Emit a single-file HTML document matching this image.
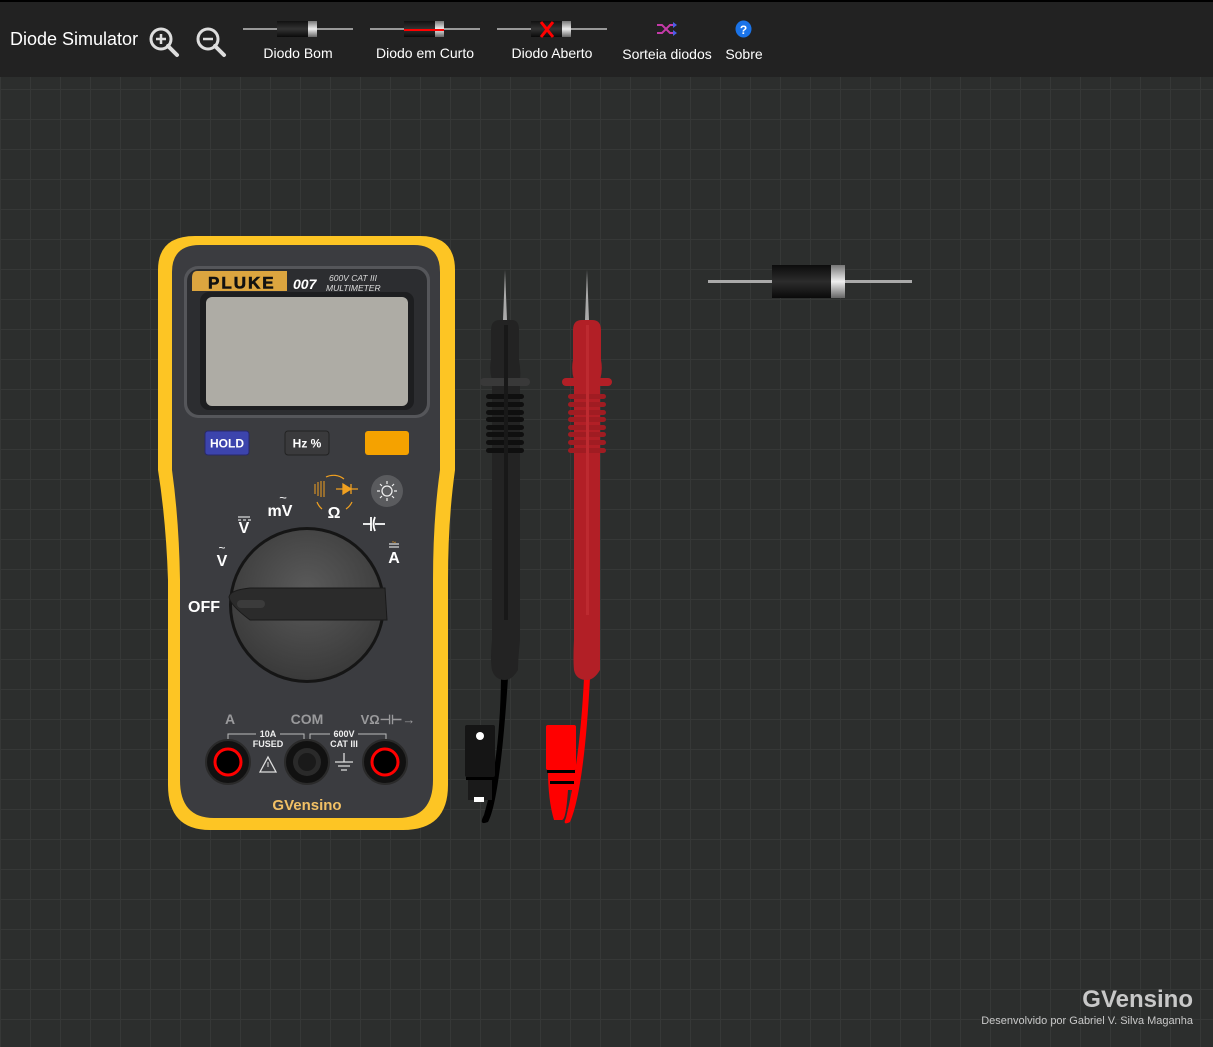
<!DOCTYPE html>
<html><head><meta charset="utf-8"><style>
*{margin:0;padding:0;box-sizing:border-box}
body{width:1213px;height:1047px;overflow:hidden;background:#2c2e2d;font-family:"Liberation Sans",Arial,sans-serif;position:relative}
.grid{position:absolute;left:0;top:77px;width:1213px;height:970px;
background-image:linear-gradient(#363837 1px,transparent 1px),linear-gradient(90deg,#363837 1px,transparent 1px);
background-size:30px 30px;background-position:0 12px,0 0}
.bar{position:absolute;left:0;top:0;width:1213px;height:77px;background:#222;border-top:2px solid #000}
.t{position:absolute;color:#fff;font-size:14px;text-align:center}
</style></head><body>
<div class="grid"></div>
<div class="bar">
<div class="t" style="left:10px;top:27px;font-size:18px;text-align:left">Diode Simulator</div>
<svg style="position:absolute;left:148px;top:24px" width="32" height="32" viewBox="0 0 32 32"><circle cx="13" cy="13" r="10" fill="none" stroke="#ddd" stroke-width="3"/><line x1="20" y1="20" x2="29" y2="29" stroke="#ddd" stroke-width="4" stroke-linecap="round"/><path d="M8 13h10M13 8v10" stroke="#ddd" stroke-width="2.5"/></svg>
<svg style="position:absolute;left:195px;top:24px" width="32" height="32" viewBox="0 0 32 32"><circle cx="13" cy="13" r="10" fill="none" stroke="#ddd" stroke-width="3"/><line x1="20" y1="20" x2="29" y2="29" stroke="#ddd" stroke-width="4" stroke-linecap="round"/><path d="M8 13h10" stroke="#ddd" stroke-width="2.5"/></svg>
<svg style="position:absolute;left:240px;top:15px" width="380" height="24">
<defs><linearGradient id="bd" x1="0" y1="0" x2="0" y2="1"><stop offset="0" stop-color="#111"/><stop offset=".5" stop-color="#333"/><stop offset="1" stop-color="#0a0a0a"/></linearGradient>
<linearGradient id="bs" x1="0" y1="0" x2="0" y2="1"><stop offset="0" stop-color="#777"/><stop offset=".5" stop-color="#eee"/><stop offset="1" stop-color="#666"/></linearGradient></defs>
<g><line x1="3" y1="12" x2="113" y2="12" stroke="#999" stroke-width="2"/><rect x="37" y="4" width="40" height="16" fill="url(#bd)"/><rect x="68" y="4" width="9" height="16" fill="url(#bs)"/></g>
<g transform="translate(127,0)"><line x1="3" y1="12" x2="113" y2="12" stroke="#999" stroke-width="2"/><rect x="37" y="4" width="40" height="16" fill="url(#bd)"/><rect x="68" y="4" width="9" height="16" fill="url(#bs)"/><line x1="37" y1="13" x2="77" y2="13" stroke="#f00" stroke-width="2"/></g>
<g transform="translate(254,0)"><line x1="3" y1="12" x2="113" y2="12" stroke="#999" stroke-width="2"/><rect x="37" y="4" width="40" height="16" fill="url(#bd)"/><rect x="68" y="4" width="9" height="16" fill="url(#bs)"/><path d="M47 5l12 15M59 5l-12 15" stroke="#f00" stroke-width="3"/></g>
</svg>
<div class="t" style="left:243px;top:43px;width:110px">Diodo Bom</div>
<div class="t" style="left:370px;top:43px;width:110px">Diodo em Curto</div>
<div class="t" style="left:497px;top:43px;width:110px">Diodo Aberto</div>
<svg style="position:absolute;left:656px;top:19px" width="22" height="16" viewBox="0 0 22 16"><path d="M1 4h5l8 8h5M1 12h5l8-8h5" fill="none" stroke="#c43aa8" stroke-width="2"/><path d="M17 1l4 3-4 3zM17 9l4 3-4 3z" fill="#4b5ee8"/></svg>
<div class="t" style="left:620px;top:44px;width:94px">Sorteia diodos</div>
<svg style="position:absolute;left:735px;top:18px" width="17" height="18"><ellipse cx="8.5" cy="9" rx="8" ry="8.5" fill="#1a73e8"/><text x="8.5" y="14" font-size="12" font-weight="bold" fill="#fff" text-anchor="middle" font-family="Liberation Sans">?</text></svg>
<div class="t" style="left:722px;top:44px;width:44px">Sobre</div>
</div>

<svg style="position:absolute;left:0;top:0" width="1213" height="1047">
<defs>
<radialGradient id="knob" cx=".5" cy=".4" r=".6"><stop offset="0" stop-color="#5a5a5a"/><stop offset="1" stop-color="#3a3a3a"/></radialGradient>
<linearGradient id="bd2" x1="0" y1="0" x2="0" y2="1"><stop offset="0" stop-color="#0c0c0c"/><stop offset=".5" stop-color="#2c2c2c"/><stop offset="1" stop-color="#0a0a0a"/></linearGradient>
<linearGradient id="bs2" x1="0" y1="0" x2="0" y2="1"><stop offset="0" stop-color="#777"/><stop offset=".5" stop-color="#f0f0f0"/><stop offset="1" stop-color="#666"/></linearGradient>
</defs>
<path d="M195 236 H420 Q455 236 455 270 V470 Q448 520 448 580 V785 Q448 830 403 830 H210 Q168 830 168 785 V580 Q166 520 158 470 V270 Q158 236 195 236Z" fill="#fdc524"/>
<path d="M200 245 H414 Q440 245 440 272 V470 Q433 520 433 580 V780 Q433 818 398 818 H214 Q180 818 180 780 V580 Q179 520 172 470 V272 Q172 245 200 245Z" fill="#3b3c40"/>
<rect x="184" y="266" width="246" height="152" rx="14" fill="#55565a"/>
<rect x="187" y="269" width="240" height="146" rx="12" fill="#2c2d30"/>
<path d="M197 271 H287 V291 H192 V278 Q192 271 197 271Z" fill="#dca53f"/>
<text x="208" y="288.5" font-size="17" font-weight="bold" fill="#111" letter-spacing="2" stroke="#111" stroke-width=".6">PLUKE</text>
<text x="293" y="289" font-size="14" font-weight="bold" font-style="italic" fill="#fff">007</text>
<text x="329" y="281" font-size="8.5" font-style="italic" fill="#ddd">600V CAT III</text>
<text x="326" y="291" font-size="8.5" font-style="italic" fill="#ddd">MULTIMETER</text>
<rect x="200" y="292" width="214" height="118" rx="9" fill="#1d1e20"/>
<rect x="206" y="297" width="202" height="109" rx="6" fill="#aeaca5"/>
<rect x="205" y="431" width="44" height="24" rx="3" fill="#3c44ad" stroke="#28296a"/>
<text x="227" y="447.5" font-size="12" font-weight="bold" fill="#fff" text-anchor="middle">HOLD</text>
<rect x="285" y="431" width="44" height="24" rx="3" fill="#3a3a3c" stroke="#222"/>
<text x="307" y="447.5" font-size="12" font-weight="bold" fill="#fff" text-anchor="middle">Hz %</text>
<rect x="365" y="431" width="44" height="24" rx="3" fill="#f5a200"/>
<text x="222" y="566" font-size="16" font-weight="bold" fill="#fff" text-anchor="middle">V</text><text x="222" y="552" font-size="12" fill="#fff" text-anchor="middle">~</text>
<text x="244" y="533" font-size="16" font-weight="bold" fill="#fff" text-anchor="middle">V</text><path d="M238 517h12M238 520h3M243 520h3M248 520h3" stroke="#fff" stroke-width="1"/>
<text x="280" y="516" font-size="16" font-weight="bold" fill="#fff" text-anchor="middle">mV</text><text x="283" y="502" font-size="13" fill="#fff" text-anchor="middle">~</text>
<text x="334" y="518" font-size="16" font-weight="bold" fill="#fff" text-anchor="middle">Ω</text>
<path d="M326 477a17 17 0 0 1 18 2M322 509a17 17 0 0 1 -5 -7M352 502a17 17 0 0 1 -6 7" fill="none" stroke="#f0a020" stroke-width="1.2"/>
<path d="M315 484v10M318 482v14M321 481v16M324 481v16" stroke="#f0a020" stroke-width="1"/>
<path d="M336 489h22M343 484l8 5-8 5zM351 484v10" fill="#f0a020" stroke="#f0a020" stroke-width="1.3"/>
<circle cx="387" cy="491" r="16" fill="#5a5b5e"/><circle cx="387" cy="491" r="5" fill="none" stroke="#eee" stroke-width="1.3"/><path d="M387 481v3M387 498v3M377 491h3M394 491h3M380 484l2 2M392 496l2 2M394 484l-2 2M382 496l-2 2" stroke="#eee" stroke-width="1.2"/>
<path d="M363 524h8M371 517v14M375 517q-3 7 0 14M375 524h10" fill="none" stroke="#fff" stroke-width="1.8"/>
<text x="394" y="563" font-size="16" font-weight="bold" fill="#fff" text-anchor="middle">A</text><path d="M389 547h10M389 544h10" stroke="#fff"/><text x="394" y="545" font-size="8" fill="#f0a020" text-anchor="middle">~</text>
<text x="204" y="612" font-size="16" font-weight="bold" fill="#fff" text-anchor="middle">OFF</text>
<circle cx="307" cy="605" r="78" fill="#151515"/>
<circle cx="307" cy="605" r="75" fill="url(#knob)"/>
<path d="M385 588 H250 Q230 590 229 597 Q230 605 250 620 H387 Z" fill="#2b2b2b" stroke="#1a1a1a"/>
<rect x="237" y="600" width="28" height="8" rx="4" fill="#3b3b3b"/>
<g font-weight="bold" fill="#9a9a9c" font-size="14" text-anchor="middle"><text x="230" y="724">A</text><text x="307" y="724">COM</text><text x="388" y="724" font-size="13">VΩ⊣⊢→</text></g>
<path d="M228 739v-5h76v5M310 739v-5h76v5" fill="none" stroke="#bbb" stroke-width="1"/>
<rect x="256" y="728" width="24" height="10" fill="#3b3c40"/><rect x="330" y="728" width="28" height="10" fill="#3b3c40"/>
<g font-size="9" font-weight="bold" fill="#eee" text-anchor="middle"><text x="268" y="737">10A</text><text x="268" y="747">FUSED</text><text x="344" y="737">600V</text><text x="344" y="747">CAT III</text></g>
<path d="M268 757l8 15h-16z" fill="none" stroke="#ddd" stroke-width="1.3"/><path d="M268 762v5" stroke="#ddd"/>
<path d="M344 753v9M335 762h18M338 766h12M341 770h6" stroke="#ddd" stroke-width="1.3"/>
<g><circle cx="228" cy="762" r="22" fill="#111" stroke="#2a2a2a" stroke-width="2"/><circle cx="228" cy="762" r="13" fill="#000" stroke="#f00" stroke-width="3"/></g>
<g><circle cx="307" cy="762" r="22" fill="#111" stroke="#2a2a2a" stroke-width="2"/><circle cx="307" cy="762" r="14" fill="#2a2a2a"/><circle cx="307" cy="762" r="9" fill="#1a1a1a"/></g>
<g><circle cx="385" cy="762" r="22" fill="#111" stroke="#2a2a2a" stroke-width="2"/><circle cx="385" cy="762" r="13" fill="#000" stroke="#f00" stroke-width="3"/></g>
<text x="307" y="810" font-size="15" font-weight="bold" fill="#f2c065" text-anchor="middle">GVensino</text>
<path d="M505 270 L503 320 H507Z" fill="#aaa"/>
<path d="M501 678 Q500 760 484 815 Q478 826 488 822 Q500 800 508 678" fill="#000"/>
<rect x="465" y="725" width="30" height="52" rx="2" fill="#151515"/><circle cx="480" cy="736" r="4" fill="#fff"/>
<rect x="466" y="777" width="28" height="3" fill="#000"/><rect x="468" y="780" width="24" height="20" fill="#1a1a1a"/><rect x="474" y="797" width="10" height="5" fill="#fff"/>
<path d="M491 330 Q491 320 500 320 H512 Q519 320 519 330 V360 Q521 370 520 380 V640 Q518 660 518 670 Q512 680 505 680 Q495 680 492 670 Q490 660 492 640 V380 Q489 370 491 360Z" fill="#232323"/>
<rect x="480" y="378" width="50" height="8" rx="4" fill="#393939"/>
<g fill="#0f0f0f"><rect x="486" y="394" width="38" height="5" rx="2.5"/><rect x="486" y="402" width="38" height="5" rx="2.5"/><rect x="486" y="410" width="38" height="5" rx="2.5"/><rect x="486" y="417" width="38" height="5" rx="2.5"/><rect x="486" y="425" width="38" height="5" rx="2.5"/><rect x="486" y="432" width="38" height="5" rx="2.5"/><rect x="486" y="440" width="38" height="5" rx="2.5"/><rect x="486" y="448" width="38" height="5" rx="2.5"/></g>
<rect x="504" y="325" width="4" height="295" fill="#181818"/>
<path d="M587 270 L585 320 H589Z" fill="#aaa"/>
<path d="M584 678 Q580 760 566 818 Q562 826 570 822 Q584 790 590 678" fill="#f00"/>
<rect x="546" y="725" width="30" height="45" rx="2" fill="#f00"/>
<path d="M548 770h28v20h-8q-2 30 -6 30h-8q-6-20 -6-50z" fill="#f00"/>
<rect x="547" y="770" width="28" height="3" fill="#000"/><rect x="550" y="781" width="24" height="3" fill="#000"/>
<path d="M573 330 Q573 320 582 320 H592 Q601 320 601 330 V360 Q603 370 600 380 V640 Q600 660 600 670 Q594 680 587 680 Q576 680 574 670 Q573 660 574 640 V380 Q571 370 573 360Z" fill="#b21f26"/>
<rect x="562" y="378" width="50" height="8" rx="4" fill="#b21f26"/>
<g fill="#a01c22"><rect x="568" y="394" width="38" height="5" rx="2.5"/><rect x="568" y="402" width="38" height="5" rx="2.5"/><rect x="568" y="410" width="38" height="5" rx="2.5"/><rect x="568" y="417" width="38" height="5" rx="2.5"/><rect x="568" y="425" width="38" height="5" rx="2.5"/><rect x="568" y="432" width="38" height="5" rx="2.5"/><rect x="568" y="440" width="38" height="5" rx="2.5"/><rect x="568" y="448" width="38" height="5" rx="2.5"/></g>
<rect x="586" y="325" width="3" height="290" fill="#bd2a30"/>
<line x1="708" y1="281.5" x2="912" y2="281.5" stroke="#aaa" stroke-width="3"/>
<rect x="772" y="265" width="60" height="33" fill="url(#bd2)"/>
<rect x="831" y="265" width="14" height="33" fill="url(#bs2)"/>
</svg>
<div style="position:absolute;right:20px;top:986px;color:#c8c8c8;font-size:24px;font-weight:bold">GVensino</div>
<div style="position:absolute;right:20px;top:1015px;color:#c8c8c8;font-size:11px">Desenvolvido por Gabriel V. Silva Maganha</div>
</body></html>
